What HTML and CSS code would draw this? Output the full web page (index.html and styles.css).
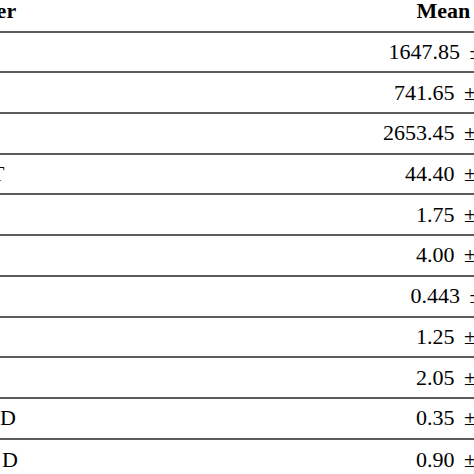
FILE: index.html
```html
<!DOCTYPE html>
<html lang="en">
<head>
<meta charset="utf-8">
<title>Table</title>
<link rel="stylesheet" href="styles.css">
</head>
<body>
<div class="viewport">
  <div class="table">
    <div class="row head">
      <div class="label">Parameter</div>
      <div class="value">Mean ± SD</div>
    </div>
    <div class="row"><div class="label">BMR</div><div class="value">1647.85 ± 412.36</div></div>
    <div class="row"><div class="label">Fat</div><div class="value">741.65 ± 263.20</div></div>
    <div class="row"><div class="label">TEE</div><div class="value">2653.45 ± 1027.81</div></div>
    <div class="row"><div class="label">AST/ALT</div><div class="value">44.40 ± 12.57</div></div>
    <div class="row"><div class="label">Iron</div><div class="value">1.75 ± 0.44</div></div>
    <div class="row"><div class="label">Zinc</div><div class="value">4.00 ± 1.12</div></div>
    <div class="row"><div class="label">Ratio</div><div class="value">0.443 ± 0.12</div></div>
    <div class="row"><div class="label">Copper</div><div class="value">1.25 ± 0.38</div></div>
    <div class="row"><div class="label">Folate</div><div class="value">2.05 ± 0.61</div></div>
    <div class="row"><div class="label">Total Vit-D</div><div class="value">0.35 ± 0.09</div></div>
    <div class="row"><div class="label">Vitamine D</div><div class="value">0.90 ± 0.27</div></div>
  </div>
</div>
</body>
</html>
```

FILE: styles.css
```css
html, body {
  margin: 0;
  padding: 0;
  background: #ffffff;
}

.viewport {
  width: 474px;
  height: 474px;
  overflow: hidden;
}

.table {
  width: 654px;
  margin-left: -84px;
  margin-top: -8px;
  font-family: "Liberation Serif", "DejaVu Serif", serif;
  font-size: 22px;
  color: #000000;
}

.row {
  display: grid;
  grid-template-columns: 454px 200px;
  align-items: center;
  height: 40.7px;
  box-sizing: border-box;
  border-bottom: 2px solid #5c5c5c;
}

.row:last-child {
  border-bottom: none;
}

.label {
  text-align: left;
  white-space: nowrap;
}

.value {
  text-align: center;
  white-space: nowrap;
  word-spacing: 4px;
}

.head {
  font-weight: bold;
}

.head .value {
  word-spacing: 1px;
}
```
